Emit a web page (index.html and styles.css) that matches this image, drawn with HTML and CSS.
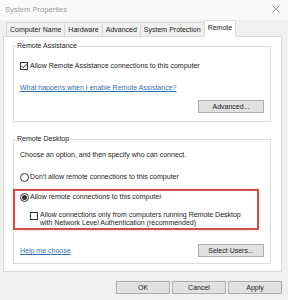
FILE: index.html
```html
<!DOCTYPE html>
<html lang="en">
<head>
    <meta charset="UTF-8">
    <meta name="viewport" content="width=device-width, initial-scale=1.0">
    <title>System Properties</title>
    <link rel="stylesheet" href="styles.css">
</head>
<body>
    <div class="window">
        <div class="titlebar">
            <span class="title">System Properties</span>
            <svg class="close" width="8" height="8" viewBox="0 0 8 8">
                <path d="M0.5 0.5 L7.5 7.5 M7.5 0.5 L0.5 7.5" stroke="#8c8c8c" stroke-width="0.8" fill="none"/>
            </svg>
        </div>

        <div class="tabs">
            <span class="tab">Computer Name</span>
            <span class="tab">Hardware</span>
            <span class="tab">Advanced</span>
            <span class="tab">System Protection</span>
            <span class="tab active">Remote</span>
        </div>

        <div class="panel">
            <fieldset class="group group-assist">
                <legend>Remote Assistance</legend>
                <div class="row check-row">
                    <span class="checkbox checked">
                        <svg width="6" height="6" viewBox="0 0 6 6">
                            <path d="M0.6 3.1 L2.3 4.8 L5.5 0.9" stroke="#222" stroke-width="0.9" fill="none"/>
                        </svg>
                    </span>
                    <span>Allow Remote Assistance connections to this computer</span>
                </div>
                <div class="row link-row">
                    <a href="#" class="link">What happens when I enable Remote Assistance?</a>
                </div>
                <div class="btn-row">
                    <button class="btn wide">Advanced...</button>
                </div>
            </fieldset>

            <fieldset class="group group-desktop">
                <legend>Remote Desktop</legend>
                <div class="row intro">Choose an option, and then specify who can connect.</div>
                <div class="row radio-row first">
                    <span class="radio"></span>
                    <span>Don't allow remote connections to this computer</span>
                </div>
                <div class="highlight">
                    <div class="row radio-row">
                        <span class="radio selected"></span>
                        <span>Allow remote connections to this computer</span>
                    </div>
                    <div class="nla">
                        <span class="checkbox"></span>
                        <span>Allow connections only from computers running Remote Desktop<br>with Network Level Authentication (recommended)</span>
                    </div>
                </div>
                <div class="help-row">
                    <a href="#" class="link">Help me choose</a>
                    <button class="btn wide">Select Users...</button>
                </div>
            </fieldset>
        </div>

        <div class="footer">
            <button class="btn">OK</button>
            <button class="btn">Cancel</button>
            <button class="btn">Apply</button>
        </div>
    </div>
</body>
</html>
```

FILE: styles.css
```css
* {
    box-sizing: border-box;
}

body {
    margin: 0;
    background-color: #f0f0f0;
}

.window {
    width: 288px;
    height: 300px;
    background-color: #f0f0f0;
    font-family: 'Liberation Sans', Arial, sans-serif;
    font-size: 7px;
    color: #222;
    overflow: hidden;
}

.titlebar {
    height: 20px;
    background-color: #fafafa;
    display: flex;
    align-items: center;
    justify-content: space-between;
    padding: 0 8px 2px 5px;
}

.title {
    font-size: 7.6px;
    color: #9a9a9a;
}

/* tabs */
.tabs {
    display: flex;
    align-items: flex-end;
    height: 16px;
    padding-left: 6px;
}

.tab {
    height: 14px;
    line-height: 13px;
    padding: 0 3px;
    border: 1px solid #d9d9d9;
    border-bottom: none;
    margin-right: -1px;
    background-color: #f0f0f0;
}

.tab.active {
    height: 17px;
    line-height: 14px;
    background-color: #fff;
    margin-bottom: -1px;
    position: relative;
    z-index: 1;
}

.panel {
    margin-left: 3px;
    width: 279px;
    height: 236px;
    background-color: #fff;
    border: 1px solid #d9d9d9;
    padding: 4px 10px 0 9px;
}

/* group boxes */
.group {
    margin: 0;
    padding: 0 6px;
    border: 1px solid #dcdcdc;
    min-width: 0;
}

.group legend {
    margin-left: -4px;
    padding: 0 1px;
    line-height: 10px;
    height: 10px;
}

.group-assist {
    padding-bottom: 8px;
}

.group-desktop {
    margin-top: 12px;
    padding-bottom: 6px;
}

.row {
    display: flex;
    align-items: center;
    height: 10px;
    line-height: 10px;
    white-space: nowrap;
}

.check-row {
    margin-top: 10px;
}

.link-row {
    margin-top: 12px;
}

.link {
    color: #2f6fb7;
    text-decoration: underline;
}

.btn-row {
    margin-top: 7px;
    display: flex;
    justify-content: flex-end;
}

.btn {
    height: 13px;
    width: 54px;
    padding: 0;
    font-family: inherit;
    font-size: 7px;
    color: #222;
    background-color: #e1e1e1;
    border: 1px solid #adadad;
}

.btn.wide {
    width: 66px;
}

.checkbox {
    width: 8px;
    height: 8px;
    border: 1px solid #333;
    background-color: #fff;
    margin-right: 2px;
    display: flex;
    align-items: center;
    justify-content: center;
    flex-shrink: 0;
}

.radio {
    width: 9px;
    height: 9px;
    border: 1px solid #333;
    border-radius: 50%;
    background-color: #fff;
    margin-right: 1px;
    display: flex;
    align-items: center;
    justify-content: center;
    flex-shrink: 0;
}

.radio.selected::after {
    content: "";
    width: 5px;
    height: 5px;
    border-radius: 50%;
    background-color: #333;
}

.intro {
    margin-top: 6px;
}

.radio-row.first {
    margin-top: 12px;
}

.highlight {
    margin: 7px 0 0 -7px;
    width: 246px;
    border: 2px solid #d64b4b;
    box-shadow: 0 0 2px rgba(200, 60, 60, 0.35);
    padding: 1px 0 1px 5px;
}

.nla {
    margin-top: 9px;
    padding-left: 10px;
    display: flex;
    align-items: flex-start;
    line-height: 8px;
    white-space: nowrap;
}

.nla .checkbox {
    margin-top: 1px;
}

.help-row {
    margin-top: 14px;
    display: flex;
    justify-content: space-between;
    align-items: center;
}

.footer {
    display: flex;
    justify-content: flex-end;
    gap: 2px;
    padding: 9px 6px 0 0;
}
```
